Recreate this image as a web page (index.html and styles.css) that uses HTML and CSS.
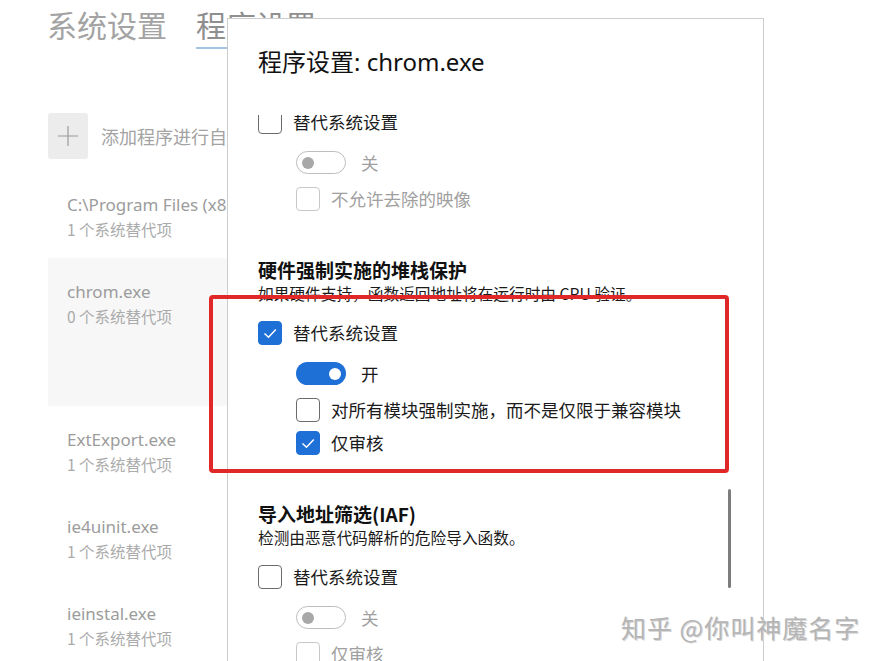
FILE: index.html
```html
<!DOCTYPE html>
<html lang="zh-CN">
<head>
<meta charset="utf-8">
<title>程序设置</title>
<link rel="stylesheet" href="styles.css">
</head>
<body>
<div class="screen">
  <div class="left">
    <div class="tabs">
      <div class="tab">系统设置</div>
      <div class="tab active">程序设置</div>
    </div>
    <div class="add-row">
      <div class="add-btn">
        <svg width="22" height="22" viewBox="0 0 22 22"><path d="M11 1V21M1 11H21" stroke="#9a9a9a" stroke-width="1.2" fill="none"/></svg>
      </div>
      <span class="add-text">添加程序进行自定义</span>
    </div>
    <div class="list">
      <div class="item"><div class="name">C:\Program Files (x86)\Internet Explorer\iexplore.exe</div><div class="sub">1 个系统替代项</div></div>
      <div class="item selected"><div class="name">chrom.exe</div><div class="sub">0 个系统替代项</div></div>
      <div class="item"><div class="name">ExtExport.exe</div><div class="sub">1 个系统替代项</div></div>
      <div class="item"><div class="name">ie4uinit.exe</div><div class="sub">1 个系统替代项</div></div>
      <div class="item"><div class="name">ieinstal.exe</div><div class="sub">1 个系统替代项</div></div>
    </div>
  </div>

  <div class="dialog">
    <div class="dlg-head"><h1 class="dlg-title">程序设置: chrom.exe</h1></div>
    <div class="dlg-body">
      <div class="dlg-scroll">
        <div class="row">
          <span class="chk"></span><span class="lbl">替代系统设置</span>
        </div>
        <div class="row sub toggle-row">
          <span class="tgl off"><span class="knob"></span></span><span class="lbl dim">关</span>
        </div>
        <div class="row sub after-toggle">
          <span class="chk disabled"></span><span class="lbl dim">不允许去除的映像</span>
        </div>

        <div class="section">
          <div class="sec-title">硬件强制实施的堆栈保护</div>
          <div class="sec-desc">如果硬件支持，函数返回地址将在运行时由 CPU 验证。</div>
        </div>
        <div class="row first">
          <span class="chk on"><svg width="22" height="22" viewBox="0 0 22 22"><path d="M5.5 11.5L9.5 15.3L16.8 7.5" stroke="#fff" stroke-width="1.5" fill="none"/></svg></span><span class="lbl">替代系统设置</span>
        </div>
        <div class="row sub toggle-row">
          <span class="tgl on"><span class="knob"></span></span><span class="lbl">开</span>
        </div>
        <div class="row sub after-toggle">
          <span class="chk"></span><span class="lbl">对所有模块强制实施，而不是仅限于兼容模块</span>
        </div>
        <div class="row sub after-check">
          <span class="chk on"><svg width="22" height="22" viewBox="0 0 22 22"><path d="M5.5 11.5L9.5 15.3L16.8 7.5" stroke="#fff" stroke-width="1.5" fill="none"/></svg></span><span class="lbl">仅审核</span>
        </div>

        <div class="section">
          <div class="sec-title">导入地址筛选(IAF)</div>
          <div class="sec-desc">检测由恶意代码解析的危险导入函数。</div>
        </div>
        <div class="row first">
          <span class="chk"></span><span class="lbl">替代系统设置</span>
        </div>
        <div class="row sub toggle-row">
          <span class="tgl off"><span class="knob"></span></span><span class="lbl dim">关</span>
        </div>
        <div class="row sub after-toggle">
          <span class="chk disabled"></span><span class="lbl dim">仅审核</span>
        </div>
      </div>
      <div class="scrollbar"></div>
    </div>
  </div>

  <div class="highlight"></div>
  <div class="watermark">知乎 @你叫神魔名字</div>
</div>
</body>
</html>
```

FILE: styles.css
```css
html, body {
  margin: 0;
  padding: 0;
  background: #fff;
}

body {
  font-family: "Noto Sans", "Noto Sans CJK SC", sans-serif;
  color: #1a1a1a;
}

.screen {
  position: relative;
  width: 881px;
  height: 661px;
  overflow: hidden;
  background: #fff;
}

/* ---------- left pane ---------- */
.left {
  width: 400px;
  padding: 4px 0 0 47px;
  box-sizing: border-box;
}

.tabs {
  display: flex;
  gap: 29px;
}

.tab {
  font-family: "Noto Sans CJK SC", sans-serif;
  font-size: 30px;
  line-height: 40px;
  color: #a3a3a3;
  padding-bottom: 3px;
  border-bottom: 2px solid transparent;
  white-space: nowrap;
}

.tab.active {
  color: #8f8f8f;
  border-bottom-color: #a3c6e4;
}

.add-row {
  display: flex;
  align-items: center;
  gap: 13px;
  width: 181px;
  overflow: hidden;
  margin-top: 64px;
  margin-left: 1px;
}

.add-btn {
  width: 40px;
  height: 46px;
  flex: none;
  background: #ececec;
  border-radius: 3px;
  display: flex;
  align-items: center;
  justify-content: center;
}

.add-text {
  font-family: "Noto Sans CJK SC", sans-serif;
  font-size: 18px;
  color: #a3a3a3;
  white-space: nowrap;
}

.list {
  margin-top: 12px;
  margin-left: 1px;
}

.item {
  width: 181px;
  height: 87px;
  box-sizing: border-box;
  padding: 22px 0 0 19px;
  white-space: nowrap;
  overflow: hidden;
}

.item.selected {
  height: 148px;
  background: #f7f7f7;
}

.name {
  font-size: 17px;
  line-height: 24px;
  color: #9c9c9c;
}

.sub {
  font-family: "Noto Sans CJK SC", sans-serif;
  font-size: 15.5px;
  line-height: 24px;
  color: #ababab;
}

/* ---------- dialog ---------- */
.dialog {
  position: absolute;
  left: 227px;
  top: 18px;
  width: 537px;
  height: 660px;
  box-sizing: border-box;
  border: 1px solid #cdcdcd;
  background: #fff;
  display: flex;
  flex-direction: column;
}

.dlg-head {
  height: 96px;
  flex: none;
  box-sizing: border-box;
  padding: 27px 0 0 30px;
}

.dlg-title {
  margin: 0;
  font-size: 24px;
  font-weight: 400;
  line-height: 32px;
  color: #111;
  white-space: nowrap;
}

.dlg-body {
  position: relative;
  flex: 1;
  overflow: hidden;
  padding-left: 30px;
}

.dlg-scroll {
  margin-top: -5px;
}

.row {
  display: flex;
  align-items: center;
  gap: 11px;
  height: 24px;
}

.row.sub {
  padding-left: 38px;
}

.row.first {
  margin-top: 15px;
}

.row.toggle-row {
  gap: 15px;
  height: 23px;
  margin-top: 17px;
}

.row.after-toggle {
  margin-top: 13px;
}

.row.after-check {
  margin-top: 9px;
}

.lbl {
  font-family: "Noto Sans CJK SC", sans-serif;
  font-size: 17.5px;
  line-height: 24px;
  color: #1a1a1a;
  white-space: nowrap;
}

.lbl.dim {
  color: #a0a0a0;
}

.chk {
  width: 24px;
  height: 24px;
  box-sizing: border-box;
  border: 1px solid #6b6b6b;
  border-radius: 4px;
  flex: none;
  display: flex;
  align-items: center;
  justify-content: center;
}

.chk.disabled {
  border-color: #c8c8c8;
}

.chk.on {
  background: #1e6fd6;
  border-color: #1e6fd6;
}

.tgl {
  width: 50px;
  height: 23px;
  box-sizing: border-box;
  border-radius: 12px;
  flex: none;
  display: flex;
  align-items: center;
  padding: 0 5px;
}

.tgl.off {
  border: 1px solid #bdbdbd;
  justify-content: flex-start;
}

.tgl.on {
  background: #1e6fd6;
  justify-content: flex-end;
}

.knob {
  width: 12px;
  height: 12px;
  border-radius: 50%;
}

.tgl.off .knob {
  background: #a8a8a8;
}

.tgl.on .knob {
  background: #fff;
}

.section {
  margin-top: 47px;
}

.sec-title {
  font-family: "Noto Sans CJK SC", sans-serif;
  font-size: 19px;
  font-weight: 700;
  line-height: 24px;
  color: #111;
  white-space: nowrap;
}

.sec-desc {
  font-family: "Noto Sans CJK SC", sans-serif;
  font-size: 15.7px;
  line-height: 24px;
  color: #1a1a1a;
  white-space: nowrap;
}

.scrollbar {
  position: absolute;
  right: 32px;
  top: 374px;
  width: 3px;
  height: 99px;
  border-radius: 2px;
  background: #7d7d7d;
}

/* ---------- overlays ---------- */
.highlight {
  position: absolute;
  left: 209px;
  top: 295px;
  width: 520px;
  height: 178px;
  box-sizing: border-box;
  border: 4px solid #e02828;
  border-radius: 4px;
}

.watermark {
  position: absolute;
  left: 621px;
  top: 611px;
  font-family: "Noto Sans CJK SC", sans-serif;
  font-size: 25px;
  line-height: 32px;
  letter-spacing: 1px;
  color: #b5b5b5;
  text-shadow: 1px 1px 0 #d9d9d9, -1px -1px 0 #fff;
  white-space: nowrap;
}
```
